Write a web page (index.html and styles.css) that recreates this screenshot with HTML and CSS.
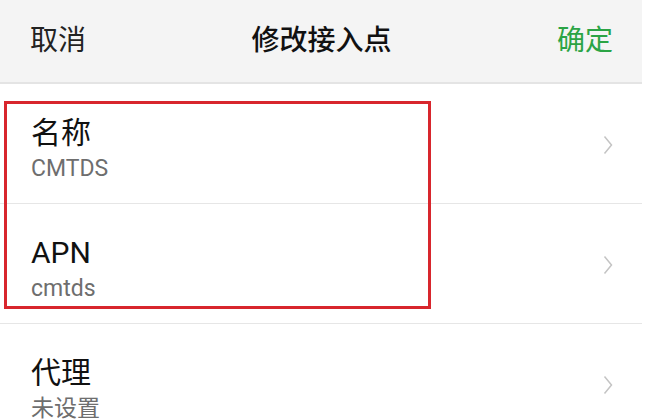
FILE: index.html
```html
<!DOCTYPE html>
<html lang="zh-CN">
<head>
<meta charset="utf-8">
<title>修改接入点</title>
<link rel="stylesheet" href="styles.css">
</head>
<body>
<div class="page">
  <header class="topbar">
    <span class="cancel">取消</span>
    <span class="title">修改接入点</span>
    <span class="ok">确定</span>
  </header>
  <ul class="list">
    <li class="row">
      <div class="text">
        <div class="label">名称</div>
        <div class="value">CMTDS</div>
      </div>
      <svg class="chev" width="10" height="20" viewBox="0 0 10 20"><polyline points="1.5,1.5 8.5,10 1.5,18.5" fill="none" stroke="#c4c4c4" stroke-width="1.5"/></svg>
    </li>
    <li class="row">
      <div class="text">
        <div class="label">APN</div>
        <div class="value">cmtds</div>
      </div>
      <svg class="chev" width="10" height="20" viewBox="0 0 10 20"><polyline points="1.5,1.5 8.5,10 1.5,18.5" fill="none" stroke="#c4c4c4" stroke-width="1.5"/></svg>
    </li>
    <li class="row">
      <div class="text">
        <div class="label">代理</div>
        <div class="value">未设置</div>
      </div>
      <svg class="chev" width="10" height="20" viewBox="0 0 10 20"><polyline points="1.5,1.5 8.5,10 1.5,18.5" fill="none" stroke="#c4c4c4" stroke-width="1.5"/></svg>
    </li>
  </ul>
  <div class="highlight"></div>
</div>
</body>
</html>
```
FILE: styles.css
```css
html, body {
  margin: 0;
  padding: 0;
  background: #ffffff;
  height: 419px;
  overflow: hidden;
}
body {
  font-family: Roboto, "Noto Sans CJK SC", sans-serif;
  color: #111111;
}
.page {
  position: relative;
  width: 642px;
}
.topbar {
  height: 82px;
  background: #f4f4f4;
  border-bottom: 2px solid #e4e4e4;
  display: flex;
  align-items: center;
  justify-content: space-between;
  padding: 0 29px 0 30px;
  font-size: 28px;
  line-height: 36px;
}
.cancel {
  color: #222222;
}
.title {
  color: #111111;
  font-weight: 500;
}
.ok {
  color: #2ba445;
}
.list {
  list-style: none;
  margin: 0;
  padding: 0;
}
.row {
  height: 119px;
  border-bottom: 1px solid #e6e6e6;
  display: flex;
  justify-content: space-between;
  align-items: flex-start;
  padding: 0 29px 0 31px;
}
.text {
  padding-top: 31px;
}
.label {
  font-size: 30px;
  line-height: 36px;
  color: #111111;
}
.value {
  font-size: 23px;
  line-height: 36px;
  color: #6e6e6e;
}
.chev {
  align-self: center;
  margin-top: 2px;
}
.highlight {
  position: absolute;
  left: 4px;
  top: 101px;
  width: 421px;
  height: 202px;
  border: 3px solid #d8262d;
}
```
